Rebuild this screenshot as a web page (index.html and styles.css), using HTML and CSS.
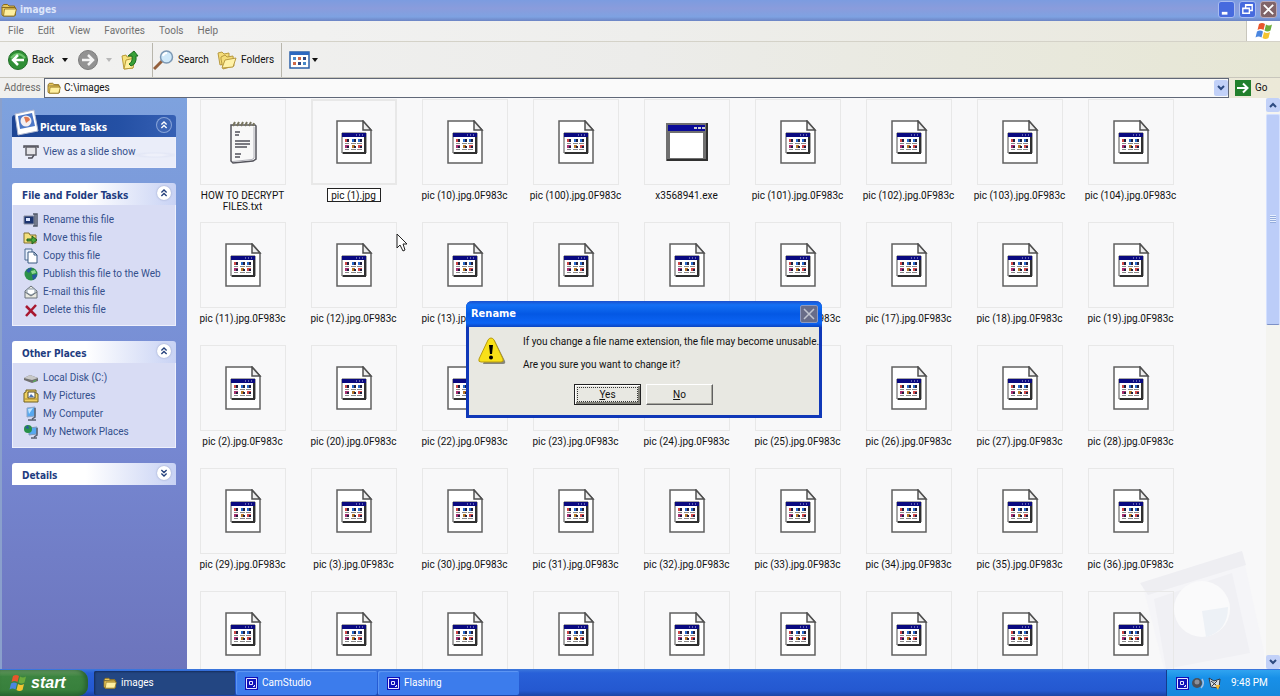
FILE: index.html
```html
<!DOCTYPE html>
<html lang="en">

<head>
    <meta charset="UTF-8">
    <meta name="viewport" content="width=device-width, initial-scale=1.0">
    <title>images</title>
    <link rel="stylesheet" href="styles.css">
</head>

<body>
    <!-- shared icons -->
    <svg class="sprite" width="0" height="0" aria-hidden="true">
        <symbol id="i-folder" viewBox="0 0 16 14">
            <path d="M1 3.500 2.500 1.500h4L8 3h5.500v2" fill="#e8c65a" stroke="#8a6d1c" />
            <path d="M1 4v8l1.500 1h11l1-1V4.500H1z" fill="#f0d060" stroke="#8a6d1c" />
            <path d="M3.500 6h12l-2 7h-11z" fill="#fff0a0" stroke="#8a6d1c" stroke-width=".8" />
        </symbol>
        <symbol id="i-file" viewBox="0 0 36 44">
            <path d="M1 1h26l8 9v33H1z" fill="#fff" stroke="#606060" stroke-width="1.500" />
            <path d="M27 1v9h8z" fill="#eee" stroke="#505050" stroke-width="1.500" />
            <path d="M6 13h24v20H6z" fill="#fff" stroke="#505050" />
            <path d="M6 13h24v4H6z" fill="#0a0a80" />
            <path d="M29 17v16H7" fill="none" stroke="#303030" stroke-width="2" />
            <path d="M20 15h1m2 0h1m2 0h1" stroke="#b8b8e0" />
            <path d="M9 19h4v3H9zM22 25h4v3h-4z" fill="#d04848" />
            <path d="M16 19h3v3h-3zM22 19h3v3h-3z" fill="#2868c8" />
            <path d="M9 25h4v3H9z" fill="#a83070" />
            <path d="M16 25h3v3h-3z" fill="#b87828" />
            <path d="M11 19h2v3h-2zM18 19h2v3h-2zM24 19h2v3h-2zM11 26h2v2h-2zM18 26h2v2h-2zM24 26h2v2h-2z" fill="#202040" />
            <path d="M9 23.500h4m2 0h5m1 0h5M9 29.500h4m2 0h5m1 0h5" stroke="#888" />
        </symbol>
        <symbol id="i-text" viewBox="0 0 36 44">
            <path d="M6 5h24l1 1v33l-3 2-20 2-2-2z" fill="#f8f8f8" stroke="#55555d" stroke-width="1.500" />
            <path d="M29 7v31l-2 1.500-19 2" fill="none" stroke="#b0b0b8" />
            <path d="M8 6l2-4m2 4 2-4m2 4 2-4m2 4 2-4m2 4 2-4m2 4 1-3" stroke="#77745f" stroke-width="2" />
            <path d="M10 12h5M10 15h4M10 21h15M10 24h15M10 27h12M10 34h6M10 37h5" stroke="#50505a" stroke-width="1.500" />
        </symbol>
        <symbol id="i-exe" viewBox="0 0 44 44">
            <path d="M1 3h42v38H1z" fill="#707070" />
            <path d="M42 3v37H2" fill="none" stroke="#303030" stroke-width="2" />
            <path d="M3 5h37v6H3z" fill="#0a0a98" />
            <path d="M29 7h3v2h-3zm4 0h3v2h-3zm4 0h3v2h-3z" fill="#d0d0d0" />
            <path d="M5 13h33v25H5z" fill="#fff" />
        </symbol>
        <symbol id="i-flag" viewBox="0 0 18 18">
            <path d="M4 2q3-2 6 0L8.500 8q-3-2-6 0z" fill="#e8562c" />
            <path d="M11 2.500q3 2 6 0l-1.500 6q-3 2-6 0z" fill="#6cac3c" />
            <path d="M2 9.500q3-2 6 0L6.500 15.500q-3-2-6 0z" fill="#4a86e0" />
            <path d="M9 10q3 2 6 0l-1.500 6q-3 2-6 0z" fill="#f4c430" />
        </symbol>
        <symbol id="i-cam" viewBox="0 0 13 13">
            <path d="M0 0h13v13H0z" fill="#1010b8" />
            <path d="M1.500 1.500h10v10h-10zM4.500 4.500h3v3h-3zM8 9.500h1.500V8" fill="none" stroke="#e8e8ff" />
        </symbol>
        <symbol id="i-up" viewBox="0 0 16 16">
            <path d="m5 7.500 3-3 3 3m-6 4 3-3 3 3" fill="none" stroke="currentColor" stroke-width="1.500" />
        </symbol>
        <symbol id="i-photo" viewBox="0 0 26 28">
            <path d="m2 5 19-4 4 21-20 4z" fill="#fff" stroke="#b0b8d0" />
            <path d="m5 7 14-3 3 13-15 3z" fill="#4d78c8" />
            <circle cx="13" cy="12" r="5.500" fill="#f4eef0" />
            <path d="M11 8q5-1 6 3l-4 3z" fill="#e07850" />
        </symbol>
    </svg>

    <header class="titlebar">
        <svg width="16" height="14"><use href="#i-folder" /></svg>
        <h1>images</h1>
        <div class="window-buttons">
            <button aria-label="Minimize"><svg viewBox="0 0 16 16"><path d="M3 12h6" stroke="#fff" stroke-width="3" /></svg></button>
            <button aria-label="Restore"><svg viewBox="0 0 16 16"><path d="M6 6V3h7v6h-3M3 6.500h7V12H3zM6 3.500h7M3 7h7" fill="none" stroke="#fff" stroke-width="1.500" /></svg></button>
            <button class="close" aria-label="Close"><svg viewBox="0 0 16 16"><path d="m3 3 10 10m0-10L3 13" stroke="#fff" stroke-width="2" /></svg></button>
        </div>
    </header>

    <nav class="menubar">
        <button>File</button>
        <button>Edit</button>
        <button>View</button>
        <button>Favorites</button>
        <button>Tools</button>
        <button>Help</button>
        <div class="throbber"><svg width="18" height="18"><use href="#i-flag" /></svg></div>
    </nav>

    <div class="toolbar">
        <button class="back">
            <svg width="20" height="20" viewBox="0 0 20 20"><circle cx="10" cy="10" r="9.500" fill="#2f8f35" stroke="#24702a" /><path d="M3 8q7-8 14 0" fill="none" stroke="#6cc46c" stroke-width="2" /><path d="M16 10H5m5-5-5 5 5 5" fill="none" stroke="#fff" stroke-width="2.500" /></svg>
            <span>Back</span>
            <i class="arrow"></i>
        </button>
        <button class="forward" aria-label="Forward">
            <svg width="20" height="20" viewBox="0 0 20 20"><circle cx="10" cy="10" r="9.500" fill="#929292" stroke="#7c7c7c" /><path d="M4 10h11m-5-5 5 5-5 5" fill="none" stroke="#f4f4f4" stroke-width="2.500" /></svg>
            <i class="arrow"></i>
        </button>
        <button class="up" aria-label="Up">
            <svg width="18" height="20" viewBox="0 0 18 20"><path d="m1 6 4-1 1 2 6-1v12l-9 1z" fill="#f6e27a" stroke="#b89a38" /><path d="m3 19 2-9 9-2-2 10z" fill="#fff0a0" stroke="#b89a38" /><path d="M8 14q4-2 3-8H7l6-5 4 5h-2q1 8-5 10z" fill="#38a038" stroke="#1c6c20" /></svg>
        </button>
        <button class="search">
            <svg width="21" height="20" viewBox="0 0 21 20"><path d="m1 19 8-8" stroke="#94603c" stroke-width="3" /><circle cx="13.500" cy="7" r="6" fill="#cfe9fa" stroke="#7c98b4" stroke-width="1.500" /><path d="M10 6q1-3 4-3" fill="none" stroke="#fff" stroke-width="2" /></svg>
            <span>Search</span>
        </button>
        <button class="folders">
            <svg width="20" height="20" viewBox="0 0 20 20"><path d="m1 3 4-1 2 2 5-1v9l-9 3z" fill="#f4dc78" stroke="#b89a40" /><path d="M4 9V7l4-2 2 2 6-1 1 10-11 3z" fill="#f4dc78" stroke="#b89a40" /><path d="m5 18 3-8 11-2-3 9z" fill="#fff2a8" stroke="#b89a40" /></svg>
            <span>Folders</span>
        </button>
        <button class="views" aria-label="Views">
            <svg width="21" height="18" viewBox="0 0 21 18"><path d="M1 1h19v16H1z" fill="#fff" stroke="#2c60a8" stroke-width="1.500" /><path d="M1 1h19v3H1z" fill="#2c68c0" /><path d="M4 6h3v3H4zM14 11h3v3h-3z" fill="#4888c8" /><path d="M9 6h3v3H9zM4 11h3v3H4z" fill="#d06848" /><path d="M14 6h3v3h-3zM9 11h3v3H9z" fill="#304880" /></svg>
            <i class="arrow"></i>
        </button>
    </div>

    <form class="addressbar">
        <label for="address">Address</label>
        <div class="address-field">
            <svg width="14" height="12"><use href="#i-folder" /></svg>
            <input id="address" type="text" value="C:\images">
            <button type="button" class="drop" aria-label="Show addresses"><svg viewBox="0 0 14 16"><path d="m4 6 3 3 3-3" fill="none" stroke="#2c4a80" stroke-width="2" /></svg></button>
        </div>
        <button type="button" class="go">
            <svg width="16" height="16" viewBox="0 0 16 16"><path d="M0 0h16v16H0z" fill="#22802c" /><path d="M2 8h10M8 3.500 12.500 8 8 12.500" fill="none" stroke="#fff" stroke-width="2" /></svg>
            <span>Go</span>
        </button>
    </form>

    <main class="explorer">
        <aside class="sidebar">
            <section class="panel primary">
                <h2>
                    <svg class="badge" width="26" height="28"><use href="#i-photo" /></svg>
                    <span>Picture Tasks</span>
                    <button aria-label="Collapse"><svg><use href="#i-up" /></svg></button>
                </h2>
                <ul>
                    <li><svg viewBox="0 0 16 16"><path d="M3 3h10v8H3z" fill="#e4e4e8" stroke="#606068" stroke-width="1.500" /><path d="M1 4V2h14v2M11 11l-2 3H5" fill="none" stroke="#50505a" stroke-width="1.500" /></svg><a href="#">View as a slide show</a></li>
                </ul>
            </section>

            <section class="panel">
                <h2>
                    <span>File and Folder Tasks</span>
                    <button aria-label="Collapse"><svg><use href="#i-up" /></svg></button>
                </h2>
                <ul>
                    <li><svg viewBox="0 0 16 16"><path d="M1 4h10v8H1z" fill="#1c3470" stroke="#8a90a0" /><path d="M3 6h4v3H3z" fill="#dce6ff" /><path d="M10 2h4v12h-4M12 2v12" fill="none" stroke="#505868" stroke-width="1.500" /></svg><a href="#">Rename this file</a></li>
                    <li><svg viewBox="0 0 16 16"><path d="M1 3h5l1 2h6v8H1z" fill="#f4e07c" stroke="#807030" /><path d="M4 9h5V6l5 4-5 4v-3H4z" fill="#48a838" stroke="#205c1c" /></svg><a href="#">Move this file</a></li>
                    <li><svg viewBox="0 0 16 16"><path d="M2 1h7v11H2z" fill="#e8f0fc" stroke="#486890" /><path d="M5 4h6l3 3v8H5z" fill="#fff" stroke="#385880" /><path d="M11 4v3h3" fill="none" stroke="#385880" /></svg><a href="#">Copy this file</a></li>
                    <li><svg viewBox="0 0 16 16"><circle cx="8" cy="8" r="6.500" fill="#2c9048" /><path d="M3 5q3-4 6-3l-3 5zM9 9l5-1q0 4-4 6z" fill="#2858a0" /><path d="M8 5l4-1 1 3-4 1z" fill="#90d890" /></svg><a href="#">Publish this file to the Web</a></li>
                    <li><svg viewBox="0 0 16 16"><path d="M2 7l6-5 6 5v7H2z" fill="#e8e8e0" stroke="#687078" /><path d="M4 5h8v4l-4 2-4-2z" fill="#fff" stroke="#8898a8" /><path d="m2 8 6 4 6-4" fill="none" stroke="#687078" /></svg><a href="#">E-mail this file</a></li>
                    <li><svg viewBox="0 0 16 16"><path d="m3 4 10 10M13 3 3 14" stroke="#a81830" stroke-width="2.500" /></svg><a href="#">Delete this file</a></li>
                </ul>
            </section>

            <section class="panel">
                <h2>
                    <span>Other Places</span>
                    <button aria-label="Collapse"><svg><use href="#i-up" /></svg></button>
                </h2>
                <ul>
                    <li><svg viewBox="0 0 16 16"><path d="m1 8 6-3 8 3v3l-6 2-8-3z" fill="#707070" /><path d="m1 8 6-3 8 3-6 2z" fill="#c8c8c8" /><path d="M10 11.500l3-1" stroke="#50c050" /></svg><a href="#">Local Disk (C:)</a></li>
                    <li><svg viewBox="0 0 16 16"><path d="M1 14V5l2-1V2h10v3l2 1v8z" fill="#f0d060" stroke="#706020" /><path d="M5 4h7v6H5z" fill="#fff" stroke="#504828" /><path d="m6 9 2-3 3 3z" fill="#4870b0" /><path d="M2 11h12" stroke="#a88828" /></svg><a href="#">My Pictures</a></li>
                    <li><svg viewBox="0 0 16 16"><path d="m4 2 8-1v9l-8 1z" fill="#58a8f0" stroke="#90a8c8" /><path d="m5 3 5-1-4 6z" fill="#c0e4ff" /><path d="M12 2v9l-3 2m-4 1h8" fill="none" stroke="#586070" stroke-width="1.500" /></svg><a href="#">My Computer</a></li>
                    <li><svg viewBox="0 0 16 16"><path d="m6 4 8-1v7l-8 1z" fill="#58a8f0" stroke="#8098b8" /><circle cx="5" cy="5" r="4" fill="#289048" /><path d="m2 4 3-3 1 4z" fill="#2858a0" /><path d="M14 4v7l-3 2m-3 1h6" fill="none" stroke="#586070" stroke-width="1.500" /></svg><a href="#">My Network Places</a></li>
                </ul>
            </section>

            <section class="panel collapsed">
                <h2>
                    <span>Details</span>
                    <button aria-label="Expand"><svg><use href="#i-up" /></svg></button>
                </h2>
            </section>
        </aside>

        <div class="files">
            <svg class="watermark" viewBox="0 0 124 120" aria-hidden="true">
                <path d="M2 34 102 2l22 100v18H24z" fill="#f5f5f8" />
                <path d="M0 34 102 2l4 14-98 30z" fill="#eeeef2" />
                <path d="m14 50 78-26 18 80-84 16z" fill="#f0f0f4" />
                <circle cx="62" cy="60" r="28" fill="#fafafb" />
                <path d="m62 62 26-4q0 24-22 30z" fill="#edf1f6" />
            </svg>
            <ul id="file-grid" class="file-grid"></ul>
        </div>

        <div class="scrollbar">
            <button aria-label="Scroll up"><svg viewBox="0 0 14 14"><path d="m4 9 3-3 3 3" fill="none" stroke="#2c4a80" stroke-width="2" /></svg></button>
            <div class="track"><div class="thumb"></div></div>
            <button aria-label="Scroll down"><svg viewBox="0 0 14 14"><path d="m4 5 3 3 3-3" fill="none" stroke="#2c4a80" stroke-width="2" /></svg></button>
        </div>
    </main>

    <footer class="taskbar">
        <button class="start"><svg width="18" height="18"><use href="#i-flag" /></svg><span>start</span></button>
        <button class="task active"><svg width="14" height="12"><use href="#i-folder" /></svg><span>images</span></button>
        <button class="task"><svg width="13" height="13"><use href="#i-cam" /></svg><span>CamStudio</span></button>
        <button class="task"><svg width="13" height="13"><use href="#i-cam" /></svg><span>Flashing</span></button>
        <div class="tray">
            <svg width="13" height="13"><use href="#i-cam" /></svg>
            <svg width="13" height="13" viewBox="0 0 13 13"><circle cx="5" cy="6" r="5" fill="#4c5058" /><circle cx="5" cy="5" r="2.500" fill="#8c9098" /><path d="M10 2q3 5-1 9" fill="none" stroke="#a8c0e0" stroke-width="1.500" /></svg>
            <svg width="13" height="13" viewBox="0 0 13 13"><path d="m1 1 5 3 6-2-1 9-8-1z" fill="#d8dce0" stroke="#303844" /><path d="m3 4 5 4m1-4L4 9" stroke="#303844" /><path d="M7 8h5l-2 5z" fill="#f4b830" /></svg>
            <time>9:48 PM</time>
        </div>
    </footer>

    <div class="dialog" role="dialog" aria-labelledby="dialog-title">
        <div class="dialog-title">
            <h2 id="dialog-title">Rename</h2>
            <button aria-label="Close"><svg viewBox="0 0 16 16"><path d="m3 3 10 10m0-10L3 13" stroke="#c0c4d0" stroke-width="1.500" /></svg></button>
        </div>
        <div class="dialog-body">
            <svg width="28" height="28" viewBox="0 0 28 28"><path d="M14 2q2 0 3 2l10 20q1 3-2 3H5z" fill="#86867c" /><path d="M13 1q2 0 3 2l9 19q1 3-2 3H3q-3 0-2-3L10 3q1-2 3-2z" fill="#f8e018" stroke="#b89c10" /><path d="M11 8h4l-1 9h-2z" /><circle cx="13" cy="20.500" r="2" /></svg>
            <div>
                <p>If you change a file name extension, the file may become unusable.</p>
                <p>Are you sure you want to change it?</p>
            </div>
        </div>
        <div class="dialog-buttons">
            <button class="default"><span><u>Y</u>es</span></button>
            <button><span><u>N</u>o</span></button>
        </div>
    </div>

    <svg class="cursor" width="12" height="19" viewBox="0 0 12 19" aria-hidden="true"><path d="M1 1v14l3-3 3 6 2-1-2-6h4z" fill="#fff" stroke="#222" /></svg>

    <script src="files.js"></script>
</body>

</html>
```
FILE: styles.css
```css
* {
    box-sizing: border-box;
}

body {
    margin: 0;
    height: 100vh;
    display: flex;
    flex-direction: column;
    overflow: hidden;
    position: relative;
    background: #ece9d8;
    font-family: Roboto, Tahoma, sans-serif;
    font-size: 10px;
    line-height: 12px;
    color: #111;
}

button,
input {
    font: inherit;
    color: inherit;
    padding: 0;
    border: none;
    background: none;
}

h1,
h2,
p,
ul {
    margin: 0;
    padding: 0;
    list-style: none;
}

h1,
h2 {
    font-family: "DejaVu Sans Condensed", "DejaVu Sans", Tahoma, sans-serif;
}

svg {
    display: block;
    flex: none;
}

.sprite {
    position: absolute;
}

/* title bar */
.titlebar {
    height: 21px;
    flex: none;
    display: flex;
    align-items: center;
    gap: 3px;
    padding: 0 3px 2px 1px;
    background: linear-gradient(#7c9ce0, #8a9cdc 40%, #7ea2e2 80%, #6c84c4);
}

.titlebar h1 {
    flex: 1;
    font-size: 10px;
    color: #dde6fa;
}

.window-buttons {
    display: flex;
    gap: 4px;
}

.window-buttons button {
    width: 17px;
    height: 17px;
    border: 1px solid #a8bcf0;
    border-radius: 3px;
    background: #466ade;
}

.window-buttons .close {
    background: #806468;
    border-color: #b8a8b8;
}

/* menu */
.menubar {
    height: 21px;
    flex: none;
    display: flex;
    align-items: stretch;
    padding-left: 8px;
    gap: 14px;
    background: linear-gradient(90deg, #f4f4f4, #eeeeec 50%, #e9e8dc);
    border-bottom: 1px solid #d4d2c8;
    color: #707070;
}

.throbber {
    margin-left: auto;
    width: 34px;
    display: flex;
    align-items: center;
    justify-content: center;
    background: #fff;
    border-left: 1px solid #c8c6bc;
}

/* toolbar */
.toolbar {
    height: 36px;
    flex: none;
    display: flex;
    align-items: center;
    padding-left: 8px;
    background: linear-gradient(90deg, #f2f2f1, #ececea 50%, #e6e6d4);
    border-bottom: 1px solid #c8c6bc;
}

.toolbar button {
    height: 34px;
    display: flex;
    align-items: center;
    gap: 4px;
}

.arrow {
    border: 3px solid transparent;
    border-top: 4px solid #111;
    border-bottom: none;
}

.toolbar .back {
    width: 70px;
}

.back .arrow {
    margin-left: 4px;
}

.toolbar .forward {
    width: 43px;
    gap: 8px;
}

.forward .arrow {
    border-top-color: #b8b8b8;
}

.toolbar .up {
    width: 31px;
}

.toolbar .search {
    width: 65px;
    border-left: 1px solid #b8b6ac;
}

.toolbar .folders {
    width: 64px;
}

.toolbar .views {
    gap: 2px;
    padding-left: 7px;
    border-left: 1px solid #b8b6ac;
}

/* address bar */
.addressbar {
    height: 20px;
    flex: none;
    display: flex;
    align-items: center;
    gap: 4px;
    padding-left: 4px;
    background: linear-gradient(90deg, #f0f0ee, #ece9d8);
    color: #686868;
}

.addressbar label {
    width: 36px;
}

.address-field {
    flex: 1;
    height: 20px;
    display: flex;
    align-items: center;
    gap: 3px;
    padding: 1px 0 1px 2px;
    border: 1px solid #606878;
    background: #fafafa;
    color: #111;
}

.address-field input {
    flex: 1;
    outline: none;
}

.drop,
.scrollbar button {
    width: 14px;
    background: #c2d1f8;
    border-radius: 2px;
}

.drop {
    height: 16px;
}

.go {
    display: flex;
    align-items: center;
    gap: 4px;
    width: 47px;
    padding-left: 2px;
    color: #111;
}

/* explorer */
.explorer {
    flex: 1;
    min-height: 0;
    display: flex;
    background: #f8f8f9;
}

.sidebar {
    width: 187px;
    flex: none;
    padding: 17px 11px 0 10px;
    display: flex;
    flex-direction: column;
    gap: 15px;
    border-left: 2px solid #8aa0cc;
    background: linear-gradient(#7ea2de, #7688d2 60%, #6c74bc);
}

.panel h2 {
    height: 22px;
    display: flex;
    align-items: center;
    padding: 0 5px 0 10px;
    font-size: 10px;
    color: #1e3c80;
    background: linear-gradient(90deg, #fff 45%, #c8d2f4);
    border-radius: 3px 3px 0 0;
    position: relative;
}

.panel h2 span {
    flex: 1;
    padding-top: 3px;
}

.panel h2 button {
    width: 14px;
    height: 14px;
    margin-bottom: 2px;
    color: #24407c;
    background: #fff;
    border-radius: 50%;
    box-shadow: 0 0 2px #8c98c0;
}

.panel h2 button svg {
    width: 14px;
    height: 14px;
}

.panel ul {
    padding: 6px 0 6px 10px;
    background: #d8dcf4;
    border: 1px solid #eef0fc;
    border-top: none;
}

.panel li {
    height: 18px;
    display: flex;
    align-items: center;
    gap: 4px;
}

.panel li svg {
    width: 16px;
    height: 16px;
}

.panel a {
    color: #34508c;
    text-decoration: none;
}

.primary h2 {
    padding-left: 28px;
    color: #fff;
    background: linear-gradient(90deg, #1c4494, #2450a4 65%, #3660b4);
}

.primary h2 button {
    color: #fff;
    background: #3c64b4;
    box-shadow: 0 0 0 1px #88a4d8;
}

.primary ul {
    background: radial-gradient(ellipse at 142px 18px, #eef0fa 8px, #e3e7f6 16px, transparent 26px), #eaedf9;
}

.badge {
    position: absolute;
    left: 1px;
    top: -6px;
}

.collapsed h2 button svg {
    transform: rotate(180deg);
}

/* file list */
.files {
    flex: 1;
    position: relative;
    overflow: hidden;
}

.file-grid {
    position: relative;
    display: grid;
    grid-template-columns: repeat(auto-fill, 111px);
    grid-auto-rows: 123px;
    padding-top: 1px;
}

.file-grid li {
    display: flex;
    flex-direction: column;
    align-items: center;
    gap: 5px;
    line-height: 11px;
    text-align: center;
}

.thumbnail {
    width: 86px;
    height: 86px;
    display: flex;
    align-items: center;
    justify-content: center;
    border: 1px solid #e8e8e8;
}

.file-name {
    max-width: 100px;
}

.editing .thumbnail {
    border-width: 2px;
}

.file-grid input {
    width: 54px;
    height: 14px;
    margin-top: -2px;
    border: 1px solid #222;
    background: #fff;
    text-align: center;
    outline: none;
}

.watermark {
    position: absolute;
    right: 2px;
    bottom: 0;
    width: 124px;
    height: 120px;
}

.scrollbar {
    width: 14px;
    flex: none;
    display: flex;
    flex-direction: column;
    background: #f4f4f0;
}

.scrollbar button {
    height: 14px;
}

.track {
    flex: 1;
    padding-top: 2px;
}

.thumb {
    height: 39%;
    border: 1px solid #d4e0ff;
    border-bottom-color: #7c90c8;
    border-radius: 2px;
    background: repeating-linear-gradient(#e8f0ff 0 1px, #94acdc 1px 2px) center / 6px 8px no-repeat, #bccdf8;
}

/* taskbar */
.taskbar {
    height: 27px;
    flex: none;
    display: flex;
    padding-top: 1px;
    background: linear-gradient(#3c78dc, #2860d8 15%, #2458d0 80%, #1c44a4);
    color: #fff;
}

.start {
    width: 88px;
    margin-right: 6px;
    display: flex;
    align-items: center;
    gap: 4px;
    padding-left: 9px;
    font-family: "Liberation Sans", Arial, sans-serif;
    font-size: 16px;
    font-weight: bold;
    font-style: italic;
    border-radius: 0 10px 10px 0;
    background: linear-gradient(#6c9c64, #3c8440 25%, #38803c 75%, #286830);
    box-shadow: inset -3px 0 4px #286030;
}

.task {
    width: 141px;
    height: 24px;
    margin-top: 1px;
    margin-right: 1px;
    display: flex;
    align-items: center;
    gap: 4px;
    padding-left: 9px;
    border-radius: 2px;
    background: #3c7cec;
    box-shadow: inset 1px 1px 1px #6098f4;
}

.task.active {
    background: #234682;
    box-shadow: inset 1px 1px 2px #142c5c;
}

.tray {
    margin-left: auto;
    width: 114px;
    display: flex;
    align-items: center;
    gap: 3px;
    padding-left: 9px;
    border-left: 1px solid #143c8c;
    background: linear-gradient(#30a4f0, #1890e8 30%, #1688dc);
}

.tray time {
    margin-left: 7px;
}

/* rename warning */
.dialog {
    position: absolute;
    left: calc(50% - 174px);
    top: 301px;
    width: 356px;
    height: 117px;
    display: flex;
    flex-direction: column;
    border: 3px solid #1038b8;
    border-top: none;
    border-radius: 6px 6px 0 0;
    background: #e8e8e2;
}

.dialog-title {
    height: 26px;
    margin: 0 -3px;
    display: flex;
    align-items: center;
    justify-content: space-between;
    padding: 0 4px 0 5px;
    color: #fff;
    border-radius: 6px 6px 0 0;
    background: linear-gradient(#1c50cc, #1470f4 15%, #0458e4 50%, #0c64f4 85%, #0c44c0);
}

.dialog-title h2 {
    font-size: 11px;
}

.dialog-title button {
    width: 18px;
    height: 18px;
    border: 1px solid #8c98c0;
    border-radius: 2px;
    background: #686c88;
}

.dialog-body {
    display: flex;
    gap: 17px;
    padding: 9px 0 0 9px;
}

.dialog-body svg {
    margin-top: 1px;
}

.dialog-body p {
    margin-bottom: 11px;
    white-space: nowrap;
}

.dialog-buttons {
    display: flex;
    gap: 5px;
    padding-left: 105px;
    margin-top: 2px;
}

.dialog-buttons button {
    width: 67px;
    height: 21px;
    padding: 2px;
    border: 1px solid;
    border-color: #fff #606060 #606060 #fff;
    box-shadow: inset -1px -1px #a8a8a0;
}

.dialog-buttons .default {
    border-color: #222;
    box-shadow: inset 1px 1px #fff, inset -2px -2px #808078;
}

.dialog-buttons span {
    display: block;
    line-height: 13px;
    border: 1px solid transparent;
}

.dialog-buttons .default span {
    border: 1px dotted #333;
}

.cursor {
    position: absolute;
    left: 396px;
    top: 233px;
}
```
FILE: files.js
```js
const names = [
    "HOW TO DECRYPT FILES.txt", "pic (1).jpg", "pic (10).jpg.0F983c", "pic (100).jpg.0F983c", "x3568941.exe",
]
const rest = [
    101, 102, 103, 104,
    11, 12, 13, 14, 15, 16, 17, 18, 19,
    2, 20, 22, 23, 24, 25, 26, 27, 28,
    29, 3, 30, 31, 32, 33, 34, 35, 36,
]
rest.forEach(n => names.push(`pic (${n}).jpg.0F983c`))

// the last row is cut off above its labels
for (let i = 0; i < 9; i++) names.push("")

const grid = document.getElementById("file-grid")
names.forEach(name => {
    let icon = "i-file"
    if (name.endsWith(".txt")) icon = "i-text"
    if (name.endsWith(".exe")) icon = "i-exe"

    const item = document.createElement("li")
    let label = `<span class="file-name">${name}</span>`
    if (name === "pic (1).jpg") {
        item.className = "editing"
        label = `<input type="text" aria-label="File name" value="${name}">`
    }
    item.innerHTML = `<div class="thumbnail"><svg width="44" height="44"><use href="#${icon}" /></svg></div>${label}`
    grid.appendChild(item)
})
```
